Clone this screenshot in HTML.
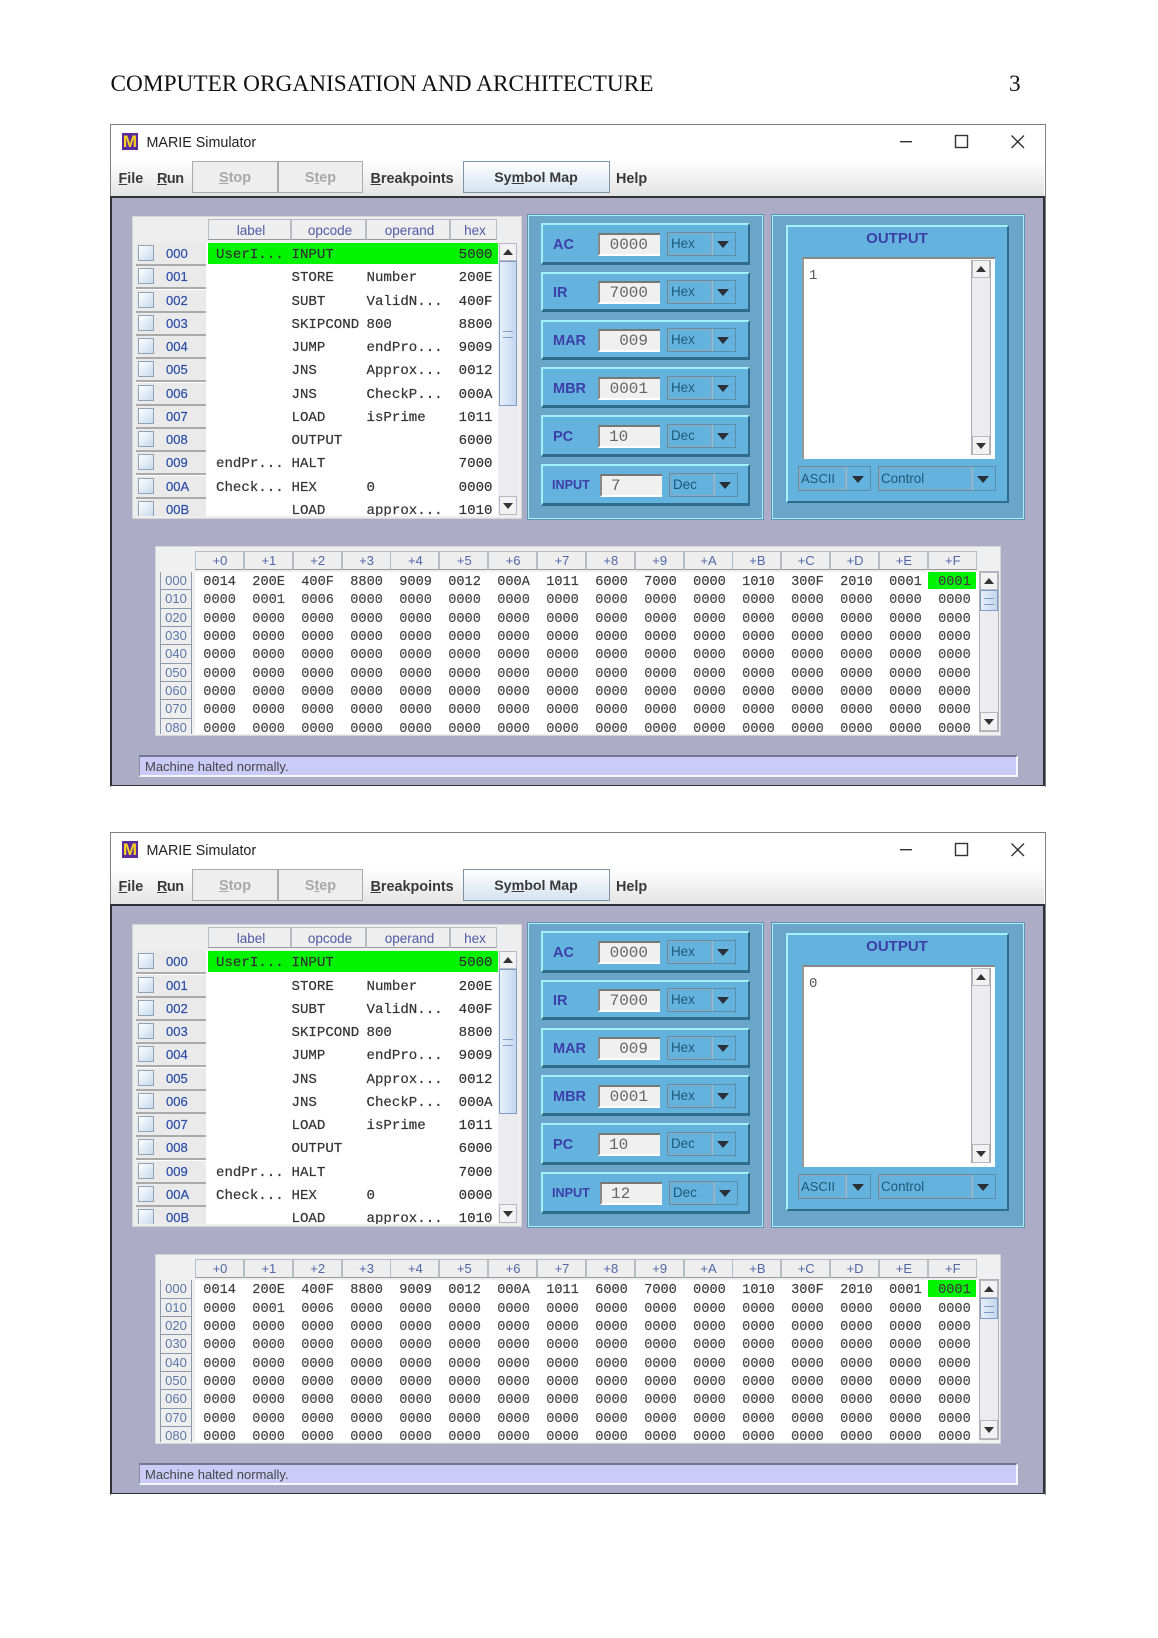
<!DOCTYPE html>
<html><head><meta charset="utf-8"><title>Computer Organisation and Architecture</title>
<style>
html,body{margin:0;padding:0;background:#fff}
body{width:1158px;height:1638px;position:relative;overflow:hidden;font-family:"Liberation Sans",sans-serif}
.abs,.win div,.win span,.win b,.win i{position:absolute;display:block}
.hd{position:absolute;top:70px;font:23.3px/28px "Liberation Serif",serif;color:#111;white-space:nowrap}
.win{position:absolute;left:0;width:1158px;height:680px;filter:blur(.3px)}
.win u{position:static;display:inline}
.frame{left:110px;top:123.5px;width:934px;height:662px;background:#fff;border:1px solid #808080;border-bottom:none;box-sizing:content-box}
.tb{left:111px;top:160px;width:933px;height:36px;background:linear-gradient(#fff,#f4f4f4 40%,#e3e3e3)}
.main{left:110px;top:196px;width:935px;height:590px;background:#acacc6;border:2px solid #303038;border-right-width:2px;border-bottom-width:1px;box-sizing:border-box}
.logo{left:122px;top:133px;width:16px;height:17px;background:#5b2a9d;color:#f5d21f;font:bold 17px/17px "Liberation Sans",sans-serif;text-align:center;overflow:hidden}
.ttl{left:146.5px;top:134px;font-size:14.3px;line-height:18px;color:#222;white-space:nowrap}
.mi{top:170px;font-weight:bold;font-size:14.4px;line-height:18px;color:#3a3a3a;white-space:nowrap}
.btn{top:161px;height:32px;box-sizing:border-box;border:1px solid #aaa;background:#eee;color:#a8a8a8;font-weight:bold;font-size:14.4px;line-height:32px;text-align:center}
.sym{background:linear-gradient(#fff,#d5e3f0);border-color:#7d93a8;color:#3a3a3a;font-size:14.2px}
.st{left:133px;top:217px;width:388px;height:301px;background:#eeeeee;box-shadow:0 0 0 1px #d5d5d5}
.hc{top:219px;height:21px;background:#eee;border:1px solid #b5bcc4;border-bottom-color:#999;box-sizing:border-box;color:#4f5aa5;font-size:13.5px;line-height:21px;text-align:center;padding-left:3px}
.rows{left:136px;top:243px;width:362px;height:273px;overflow:hidden;background:#fff}
.r{left:0;width:362px;height:23px}
.rh{left:0;top:0;width:70px;height:23px;background:#eaeaea;border-bottom:2px solid #aaa;box-sizing:border-box}
.cb{left:2px;top:2px;width:16px;height:16px;background:linear-gradient(135deg,#fff,#c5d9ec);border:1px solid #8fa3b8;box-sizing:border-box}
.n{left:30px;top:0;font-size:13px;line-height:22px;color:#2b4ea8;-webkit-text-stroke:.2px #2b4ea8}
.m{font:14.1px/24px "Liberation Mono",monospace;color:#333;top:0;white-space:pre;-webkit-text-stroke:.2px #333}
.a{left:80px}.o{left:155.5px}.p{left:230.5px}.h{right:5.5px}
.g{left:72px;top:-1px;width:290px;height:22px;background:#00f400}
.sb{background:#ececf0}
.ub{background:#f2f2f2;border:1px solid #b8b8c0;box-sizing:border-box}
.th{background:linear-gradient(90deg,#e8f0fa,#c3d7ee);border:1px solid #7f9dc4;box-sizing:border-box}
.up,.dn{width:0;height:0;border-left:5.5px solid transparent;border-right:5.5px solid transparent;left:50%;top:50%;margin-left:-5.5px}
.up{border-bottom:6px solid #333;margin-top:-3px}
.dn{border-top:6px solid #333;margin-top:-3px}
.grip{left:3px;right:3px;top:50%;height:5px;margin-top:-3px;border-top:1px solid #7f9dc4;border-bottom:1px solid #7f9dc4}
.panel{top:215px;height:304px;background:#6ba6ca;border:1px solid #a8eefc;border-right-color:#a8eefc;box-sizing:border-box;box-shadow:0 0 0 1px #5e93b5}
.reg{left:541px;width:209px;background:#64b3de;border:2px solid #a3f0fb;border-right-color:#2f6b8a;border-bottom-color:#2f6b8a;border-width:2px 2px 3px 2px;box-sizing:border-box}
.lb{font-weight:bold;font-size:14.5px;line-height:18px;color:#3c3eaa;white-space:nowrap;margin:1px 0 0 -1px}
.fld{width:62px;height:23px;background:#f0f0f0;border-top:2px solid #777;border-left:2px solid #888;border-bottom:2px solid #fff;box-sizing:border-box;font:16px/20px "Liberation Mono",monospace;color:#666;white-space:pre}
.cmb{height:24px;background:#64b3de;border:1px solid #5f8ea8;box-sizing:border-box;}
.ct{left:0;top:0;bottom:0;border-right:1px solid #9fbccc;box-shadow:inset 0 0 0 1px #8fa8bd;box-sizing:border-box;font-size:13.4px;line-height:22px;color:#1e5878;padding-left:3px;white-space:nowrap}
.ca{right:0;top:0;bottom:0;}
.ca i{left:50%;top:50%;width:0;height:0;margin:-3px 0 0 -6.5px;border-left:6.5px solid transparent;border-right:6.5px solid transparent;border-top:7px solid #2a3038}
.outer{left:786px;top:225px;width:223px;height:278px;background:#64b3de;border:2px solid #a3f0fb;border-right-color:#2f6b8a;border-bottom-color:#2f6b8a;box-sizing:border-box}
.ta{left:802px;top:257px;width:193px;height:202px;background:#fff;border-top:2px solid #888;border-left:2px solid #999;box-sizing:border-box;font:14px/18px "Liberation Mono",monospace;color:#555}
.mem{left:156px;top:547px;width:844px;height:188px;background:#f0f0f0;box-shadow:0 0 0 1px #d5d5d5}
.mh{top:551px;height:19px;width:49px;background:#eee;border:1px solid #b5bcc4;border-left-color:#b5bcc4;border-bottom-color:#999;box-sizing:border-box;color:#5068a8;font-size:13px;line-height:18px;text-align:center;padding-left:1px}
.mr{left:160px;top:572px;width:819px;height:162px;overflow:hidden}
.mw{left:35px;top:0;width:784px;height:162px;background:#fff}
.mg{left:733px;top:0;width:48px;height:17px;background:#00f400}
.ml{left:43.3px;margin-top:2px;font:13.6px/18px "Liberation Mono",monospace;word-spacing:8.2px;color:#4a4a4a;white-space:pre;-webkit-text-stroke:.2px #4a4a4a}
.ml.d{color:#3a3a3a}
.mn{left:0;width:32px;height:18.35px;background:#eee;border:1px solid #8a9bad;border-top:none;box-sizing:border-box;color:#5a78a8;font-size:13px;line-height:18.5px;text-align:center}
.stat{left:139px;top:755px;width:879px;height:22px;background:#cbcbf8;border-top:2px solid #767690;border-left:1px solid #8a8aa0;border-bottom:2px solid #f6f6ff;border-right:2px solid #f6f6ff;box-sizing:border-box;font-size:13px;line-height:20px;color:#444;padding-left:5px}
svg{position:absolute;left:0;top:0}
</style></head><body>
<div class="hd" style="left:110.5px">COMPUTER ORGANISATION AND ARCHITECTURE</div>
<div class="hd" style="left:1009px">3</div>

<div class="win" style="top:0">
<div class="frame"></div><div class="tb"></div><div class="main"></div>
<div class="logo">M</div><div class="ttl">MARIE Simulator</div>
<svg width="1158" height="200" fill="none" stroke="#333" stroke-width="1.4"><path d="M900 141.7H912"/><rect x="955.5" y="135.5" width="12" height="12"/><path d="M1011.5 135.5L1024 148M1024 135.5L1011.5 148"/></svg>
<div class="mi" style="left:118.5px"><u>F</u>ile</div><div class="mi" style="left:157px;letter-spacing:-.5px"><u>R</u>un</div>
<div class="btn" style="left:192px;width:86px"><u>S</u>top</div><div class="btn" style="left:278px;width:85px">S<u>t</u>ep</div>
<div class="mi" style="left:370.5px"><u>B</u>reakpoints</div>
<div class="btn sym" style="left:462.5px;width:147px">Sy<u>m</u>bol Map</div>
<div class="mi" style="left:616px">Help</div>

<div class="st"></div>
<div class="hc" style="left:208px;width:83px">label</div><div class="hc" style="left:291px;width:75px">opcode</div><div class="hc" style="left:366px;width:84px">operand</div><div class="hc" style="left:450px;width:47px">hex</div>
<div class="rows">
<div class="r" style="top:0"><div class="g"></div><div class="rh"><i class="cb"></i><b class="n" style="font-weight:normal">000</b></div><span class="m a">UserI...</span><span class="m o">INPUT</span><span class="m h">5000</span></div>
<div class="r" style="top:23.27px"><div class="rh"><i class="cb"></i><span class="n">001</span></div><span class="m o">STORE</span><span class="m p">Number</span><span class="m h">200E</span></div>
<div class="r" style="top:46.54px"><div class="rh"><i class="cb"></i><span class="n">002</span></div><span class="m o">SUBT</span><span class="m p">ValidN...</span><span class="m h">400F</span></div>
<div class="r" style="top:69.81px"><div class="rh"><i class="cb"></i><span class="n">003</span></div><span class="m o">SKIPCOND</span><span class="m p">800</span><span class="m h">8800</span></div>
<div class="r" style="top:93.08px"><div class="rh"><i class="cb"></i><span class="n">004</span></div><span class="m o">JUMP</span><span class="m p">endPro...</span><span class="m h">9009</span></div>
<div class="r" style="top:116.35px"><div class="rh"><i class="cb"></i><span class="n">005</span></div><span class="m o">JNS</span><span class="m p">Approx...</span><span class="m h">0012</span></div>
<div class="r" style="top:139.62px"><div class="rh"><i class="cb"></i><span class="n">006</span></div><span class="m o">JNS</span><span class="m p">CheckP...</span><span class="m h">000A</span></div>
<div class="r" style="top:162.89px"><div class="rh"><i class="cb"></i><span class="n">007</span></div><span class="m o">LOAD</span><span class="m p">isPrime</span><span class="m h">1011</span></div>
<div class="r" style="top:186.16px"><div class="rh"><i class="cb"></i><span class="n">008</span></div><span class="m o">OUTPUT</span><span class="m h">6000</span></div>
<div class="r" style="top:209.43px"><div class="rh"><i class="cb"></i><span class="n">009</span></div><span class="m a">endPr...</span><span class="m o">HALT</span><span class="m h">7000</span></div>
<div class="r" style="top:232.7px"><div class="rh"><i class="cb"></i><span class="n">00A</span></div><span class="m a">Check...</span><span class="m o">HEX</span><span class="m p">0</span><span class="m h">0000</span></div>
<div class="r" style="top:255.97px"><div class="rh"><i class="cb"></i><span class="n">00B</span></div><span class="m o">LOAD</span><span class="m p">approx...</span><span class="m h">1010</span></div>
</div>
<div class="sb" style="left:499px;top:243px;width:18px;height:273px"></div>
<div class="ub" style="left:499px;top:243px;width:18px;height:18px"><i class="up"></i></div>
<div class="th" style="left:499px;top:261px;width:18px;height:145px"><i class="grip"></i></div>
<div class="ub" style="left:499px;top:496px;width:18px;height:19px"><i class="dn"></i></div>

<div class="panel" style="left:528px;width:235px"></div>
<div class="reg" style="top:223px;height:42px"></div><div class="reg" style="top:272px;height:40px"></div><div class="reg" style="top:320px;height:40px"></div><div class="reg" style="top:367px;height:41px"></div><div class="reg" style="top:415px;height:42px"></div><div class="reg" style="top:464px;height:42px"></div>
<div class="lb" style="left:554px;top:235px">AC</div><div class="lb" style="left:554px;top:283px">IR</div><div class="lb" style="left:554px;top:331px">MAR</div><div class="lb" style="left:554px;top:379px">MBR</div><div class="lb" style="left:554px;top:427px">PC</div><div class="lb" style="left:553px;top:475px;font-size:12.6px">INPUT</div>
<div class="fld" style="left:598px;top:233px;text-align:right;padding-right:12px">0000</div>
<div class="fld" style="left:598px;top:281px;text-align:right;padding-right:12px">7000</div>
<div class="fld" style="left:598px;top:329px;text-align:right;padding-right:12px">009</div>
<div class="fld" style="left:598px;top:377px;text-align:right;padding-right:12px">0001</div>
<div class="fld" style="left:598px;top:425px;padding-left:9px">10</div>
<div class="fld" style="left:600px;top:474px;padding-left:9px">7</div>
<div class="cmb" style="left:667px;top:232px;width:69px"><div class="ct" style="width:45px">Hex</div><div class="ca" style="width:23px"><i></i></div></div>
<div class="cmb" style="left:667px;top:280px;width:69px"><div class="ct" style="width:45px">Hex</div><div class="ca" style="width:23px"><i></i></div></div>
<div class="cmb" style="left:667px;top:328px;width:69px"><div class="ct" style="width:45px">Hex</div><div class="ca" style="width:23px"><i></i></div></div>
<div class="cmb" style="left:667px;top:376px;width:69px"><div class="ct" style="width:45px">Hex</div><div class="ca" style="width:23px"><i></i></div></div>
<div class="cmb" style="left:667px;top:424px;width:69px"><div class="ct" style="width:45px">Dec</div><div class="ca" style="width:23px"><i></i></div></div>
<div class="cmb" style="left:669px;top:473px;width:69px"><div class="ct" style="width:45px">Dec</div><div class="ca" style="width:23px"><i></i></div></div>

<div class="panel" style="left:772px;width:252px"></div>
<div class="outer"></div>
<div class="lb" style="left:786px;width:224px;text-align:center;top:229px;font-size:15px">OUTPUT</div>
<div class="ta"><span style="left:5px;top:8px">1</span></div>
<div class="sb" style="left:972px;top:260px;width:18px;height:195px;box-shadow:-1px 0 0 #aaa,1px 0 0 #aaa"></div>
<div class="ub" style="left:972px;top:260px;width:18px;height:18px"><i class="up"></i></div>
<div class="ub" style="left:972px;top:436px;width:18px;height:19px"><i class="dn"></i></div>
<div class="cmb" style="left:798px;top:466px;width:73px;height:25px"><div class="ct" style="width:48px;font-size:13px;padding-left:2px;line-height:24px">ASCII</div><div class="ca" style="width:24px"><i></i></div></div>
<div class="cmb" style="left:878px;top:466px;width:118px;height:25px"><div class="ct" style="width:94px;padding-left:2px;line-height:24px">Control</div><div class="ca" style="width:23px"><i></i></div></div>

<div class="mem"></div>
<div class="mh" style="left:195px">+0</div><div class="mh" style="left:243.9px">+1</div><div class="mh" style="left:292.7px">+2</div><div class="mh" style="left:341.6px">+3</div><div class="mh" style="left:390.4px">+4</div><div class="mh" style="left:439.3px">+5</div><div class="mh" style="left:488.1px">+6</div><div class="mh" style="left:537px">+7</div><div class="mh" style="left:585.8px">+8</div><div class="mh" style="left:634.7px">+9</div><div class="mh" style="left:683.5px">+A</div><div class="mh" style="left:732.4px">+B</div><div class="mh" style="left:781.2px">+C</div><div class="mh" style="left:830.1px">+D</div><div class="mh" style="left:878.9px">+E</div><div class="mh" style="left:927.8px">+F</div>
<div class="mr"><div class="mw"><div class="mg"></div></div>
<div class="mn" style="top:0">000</div><div class="mn" style="top:18.35px">010</div><div class="mn" style="top:36.7px">020</div><div class="mn" style="top:55.05px">030</div><div class="mn" style="top:73.4px">040</div><div class="mn" style="top:91.75px">050</div><div class="mn" style="top:110.1px">060</div><div class="mn" style="top:128.45px">070</div><div class="mn" style="top:146.8px">080</div>
<div class="ml d" style="top:0">0014 200E 400F 8800 9009 0012 000A 1011 6000 7000 0000 1010 300F 2010 0001 0001</div>
<div class="ml" style="top:18.35px">0000 0001 0006 0000 0000 0000 0000 0000 0000 0000 0000 0000 0000 0000 0000 0000</div>
<div class="ml" style="top:36.7px">0000 0000 0000 0000 0000 0000 0000 0000 0000 0000 0000 0000 0000 0000 0000 0000</div>
<div class="ml" style="top:55.05px">0000 0000 0000 0000 0000 0000 0000 0000 0000 0000 0000 0000 0000 0000 0000 0000</div>
<div class="ml" style="top:73.4px">0000 0000 0000 0000 0000 0000 0000 0000 0000 0000 0000 0000 0000 0000 0000 0000</div>
<div class="ml" style="top:91.75px">0000 0000 0000 0000 0000 0000 0000 0000 0000 0000 0000 0000 0000 0000 0000 0000</div>
<div class="ml" style="top:110.1px">0000 0000 0000 0000 0000 0000 0000 0000 0000 0000 0000 0000 0000 0000 0000 0000</div>
<div class="ml" style="top:128.45px">0000 0000 0000 0000 0000 0000 0000 0000 0000 0000 0000 0000 0000 0000 0000 0000</div>
<div class="ml" style="top:146.8px">0000 0000 0000 0000 0000 0000 0000 0000 0000 0000 0000 0000 0000 0000 0000 0000</div>
</div>
<div class="sb" style="left:980px;top:572px;width:18px;height:159px;box-shadow:0 0 0 1px #b0b0b8"></div>
<div class="ub" style="left:980px;top:572px;width:18px;height:18px"><i class="up"></i></div>
<div class="th" style="left:980px;top:590px;width:18px;height:21px"><i class="grip"></i></div>
<div class="ub" style="left:980px;top:712px;width:18px;height:19px"><i class="dn"></i></div>
<div class="stat">Machine halted normally.</div>
</div>

<div class="win" style="top:708.3px">
<div class="frame"></div><div class="tb"></div><div class="main"></div>
<div class="logo">M</div><div class="ttl">MARIE Simulator</div>
<svg width="1158" height="200" fill="none" stroke="#333" stroke-width="1.4"><path d="M900 141.7H912"/><rect x="955.5" y="135.5" width="12" height="12"/><path d="M1011.5 135.5L1024 148M1024 135.5L1011.5 148"/></svg>
<div class="mi" style="left:118.5px"><u>F</u>ile</div><div class="mi" style="left:157px;letter-spacing:-.5px"><u>R</u>un</div>
<div class="btn" style="left:192px;width:86px"><u>S</u>top</div><div class="btn" style="left:278px;width:85px">S<u>t</u>ep</div>
<div class="mi" style="left:370.5px"><u>B</u>reakpoints</div>
<div class="btn sym" style="left:462.5px;width:147px">Sy<u>m</u>bol Map</div>
<div class="mi" style="left:616px">Help</div>

<div class="st"></div>
<div class="hc" style="left:208px;width:83px">label</div><div class="hc" style="left:291px;width:75px">opcode</div><div class="hc" style="left:366px;width:84px">operand</div><div class="hc" style="left:450px;width:47px">hex</div>
<div class="rows">
<div class="r" style="top:0"><div class="g"></div><div class="rh"><i class="cb"></i><b class="n" style="font-weight:normal">000</b></div><span class="m a">UserI...</span><span class="m o">INPUT</span><span class="m h">5000</span></div>
<div class="r" style="top:23.27px"><div class="rh"><i class="cb"></i><span class="n">001</span></div><span class="m o">STORE</span><span class="m p">Number</span><span class="m h">200E</span></div>
<div class="r" style="top:46.54px"><div class="rh"><i class="cb"></i><span class="n">002</span></div><span class="m o">SUBT</span><span class="m p">ValidN...</span><span class="m h">400F</span></div>
<div class="r" style="top:69.81px"><div class="rh"><i class="cb"></i><span class="n">003</span></div><span class="m o">SKIPCOND</span><span class="m p">800</span><span class="m h">8800</span></div>
<div class="r" style="top:93.08px"><div class="rh"><i class="cb"></i><span class="n">004</span></div><span class="m o">JUMP</span><span class="m p">endPro...</span><span class="m h">9009</span></div>
<div class="r" style="top:116.35px"><div class="rh"><i class="cb"></i><span class="n">005</span></div><span class="m o">JNS</span><span class="m p">Approx...</span><span class="m h">0012</span></div>
<div class="r" style="top:139.62px"><div class="rh"><i class="cb"></i><span class="n">006</span></div><span class="m o">JNS</span><span class="m p">CheckP...</span><span class="m h">000A</span></div>
<div class="r" style="top:162.89px"><div class="rh"><i class="cb"></i><span class="n">007</span></div><span class="m o">LOAD</span><span class="m p">isPrime</span><span class="m h">1011</span></div>
<div class="r" style="top:186.16px"><div class="rh"><i class="cb"></i><span class="n">008</span></div><span class="m o">OUTPUT</span><span class="m h">6000</span></div>
<div class="r" style="top:209.43px"><div class="rh"><i class="cb"></i><span class="n">009</span></div><span class="m a">endPr...</span><span class="m o">HALT</span><span class="m h">7000</span></div>
<div class="r" style="top:232.7px"><div class="rh"><i class="cb"></i><span class="n">00A</span></div><span class="m a">Check...</span><span class="m o">HEX</span><span class="m p">0</span><span class="m h">0000</span></div>
<div class="r" style="top:255.97px"><div class="rh"><i class="cb"></i><span class="n">00B</span></div><span class="m o">LOAD</span><span class="m p">approx...</span><span class="m h">1010</span></div>
</div>
<div class="sb" style="left:499px;top:243px;width:18px;height:273px"></div>
<div class="ub" style="left:499px;top:243px;width:18px;height:18px"><i class="up"></i></div>
<div class="th" style="left:499px;top:261px;width:18px;height:145px"><i class="grip"></i></div>
<div class="ub" style="left:499px;top:496px;width:18px;height:19px"><i class="dn"></i></div>

<div class="panel" style="left:528px;width:235px"></div>
<div class="reg" style="top:223px;height:42px"></div><div class="reg" style="top:272px;height:40px"></div><div class="reg" style="top:320px;height:40px"></div><div class="reg" style="top:367px;height:41px"></div><div class="reg" style="top:415px;height:42px"></div><div class="reg" style="top:464px;height:42px"></div>
<div class="lb" style="left:554px;top:235px">AC</div><div class="lb" style="left:554px;top:283px">IR</div><div class="lb" style="left:554px;top:331px">MAR</div><div class="lb" style="left:554px;top:379px">MBR</div><div class="lb" style="left:554px;top:427px">PC</div><div class="lb" style="left:553px;top:475px;font-size:12.6px">INPUT</div>
<div class="fld" style="left:598px;top:233px;text-align:right;padding-right:12px">0000</div>
<div class="fld" style="left:598px;top:281px;text-align:right;padding-right:12px">7000</div>
<div class="fld" style="left:598px;top:329px;text-align:right;padding-right:12px">009</div>
<div class="fld" style="left:598px;top:377px;text-align:right;padding-right:12px">0001</div>
<div class="fld" style="left:598px;top:425px;padding-left:9px">10</div>
<div class="fld" style="left:600px;top:474px;padding-left:9px">12</div>
<div class="cmb" style="left:667px;top:232px;width:69px"><div class="ct" style="width:45px">Hex</div><div class="ca" style="width:23px"><i></i></div></div>
<div class="cmb" style="left:667px;top:280px;width:69px"><div class="ct" style="width:45px">Hex</div><div class="ca" style="width:23px"><i></i></div></div>
<div class="cmb" style="left:667px;top:328px;width:69px"><div class="ct" style="width:45px">Hex</div><div class="ca" style="width:23px"><i></i></div></div>
<div class="cmb" style="left:667px;top:376px;width:69px"><div class="ct" style="width:45px">Hex</div><div class="ca" style="width:23px"><i></i></div></div>
<div class="cmb" style="left:667px;top:424px;width:69px"><div class="ct" style="width:45px">Dec</div><div class="ca" style="width:23px"><i></i></div></div>
<div class="cmb" style="left:669px;top:473px;width:69px"><div class="ct" style="width:45px">Dec</div><div class="ca" style="width:23px"><i></i></div></div>

<div class="panel" style="left:772px;width:252px"></div>
<div class="outer"></div>
<div class="lb" style="left:786px;width:224px;text-align:center;top:229px;font-size:15px">OUTPUT</div>
<div class="ta"><span style="left:5px;top:8px">0</span></div>
<div class="sb" style="left:972px;top:260px;width:18px;height:195px;box-shadow:-1px 0 0 #aaa,1px 0 0 #aaa"></div>
<div class="ub" style="left:972px;top:260px;width:18px;height:18px"><i class="up"></i></div>
<div class="ub" style="left:972px;top:436px;width:18px;height:19px"><i class="dn"></i></div>
<div class="cmb" style="left:798px;top:466px;width:73px;height:25px"><div class="ct" style="width:48px;font-size:13px;padding-left:2px;line-height:24px">ASCII</div><div class="ca" style="width:24px"><i></i></div></div>
<div class="cmb" style="left:878px;top:466px;width:118px;height:25px"><div class="ct" style="width:94px;padding-left:2px;line-height:24px">Control</div><div class="ca" style="width:23px"><i></i></div></div>

<div class="mem"></div>
<div class="mh" style="left:195px">+0</div><div class="mh" style="left:243.9px">+1</div><div class="mh" style="left:292.7px">+2</div><div class="mh" style="left:341.6px">+3</div><div class="mh" style="left:390.4px">+4</div><div class="mh" style="left:439.3px">+5</div><div class="mh" style="left:488.1px">+6</div><div class="mh" style="left:537px">+7</div><div class="mh" style="left:585.8px">+8</div><div class="mh" style="left:634.7px">+9</div><div class="mh" style="left:683.5px">+A</div><div class="mh" style="left:732.4px">+B</div><div class="mh" style="left:781.2px">+C</div><div class="mh" style="left:830.1px">+D</div><div class="mh" style="left:878.9px">+E</div><div class="mh" style="left:927.8px">+F</div>
<div class="mr"><div class="mw"><div class="mg"></div></div>
<div class="mn" style="top:0">000</div><div class="mn" style="top:18.35px">010</div><div class="mn" style="top:36.7px">020</div><div class="mn" style="top:55.05px">030</div><div class="mn" style="top:73.4px">040</div><div class="mn" style="top:91.75px">050</div><div class="mn" style="top:110.1px">060</div><div class="mn" style="top:128.45px">070</div><div class="mn" style="top:146.8px">080</div>
<div class="ml d" style="top:0">0014 200E 400F 8800 9009 0012 000A 1011 6000 7000 0000 1010 300F 2010 0001 0001</div>
<div class="ml" style="top:18.35px">0000 0001 0006 0000 0000 0000 0000 0000 0000 0000 0000 0000 0000 0000 0000 0000</div>
<div class="ml" style="top:36.7px">0000 0000 0000 0000 0000 0000 0000 0000 0000 0000 0000 0000 0000 0000 0000 0000</div>
<div class="ml" style="top:55.05px">0000 0000 0000 0000 0000 0000 0000 0000 0000 0000 0000 0000 0000 0000 0000 0000</div>
<div class="ml" style="top:73.4px">0000 0000 0000 0000 0000 0000 0000 0000 0000 0000 0000 0000 0000 0000 0000 0000</div>
<div class="ml" style="top:91.75px">0000 0000 0000 0000 0000 0000 0000 0000 0000 0000 0000 0000 0000 0000 0000 0000</div>
<div class="ml" style="top:110.1px">0000 0000 0000 0000 0000 0000 0000 0000 0000 0000 0000 0000 0000 0000 0000 0000</div>
<div class="ml" style="top:128.45px">0000 0000 0000 0000 0000 0000 0000 0000 0000 0000 0000 0000 0000 0000 0000 0000</div>
<div class="ml" style="top:146.8px">0000 0000 0000 0000 0000 0000 0000 0000 0000 0000 0000 0000 0000 0000 0000 0000</div>
</div>
<div class="sb" style="left:980px;top:572px;width:18px;height:159px;box-shadow:0 0 0 1px #b0b0b8"></div>
<div class="ub" style="left:980px;top:572px;width:18px;height:18px"><i class="up"></i></div>
<div class="th" style="left:980px;top:590px;width:18px;height:21px"><i class="grip"></i></div>
<div class="ub" style="left:980px;top:712px;width:18px;height:19px"><i class="dn"></i></div>
<div class="stat">Machine halted normally.</div>
</div>
</body></html>
